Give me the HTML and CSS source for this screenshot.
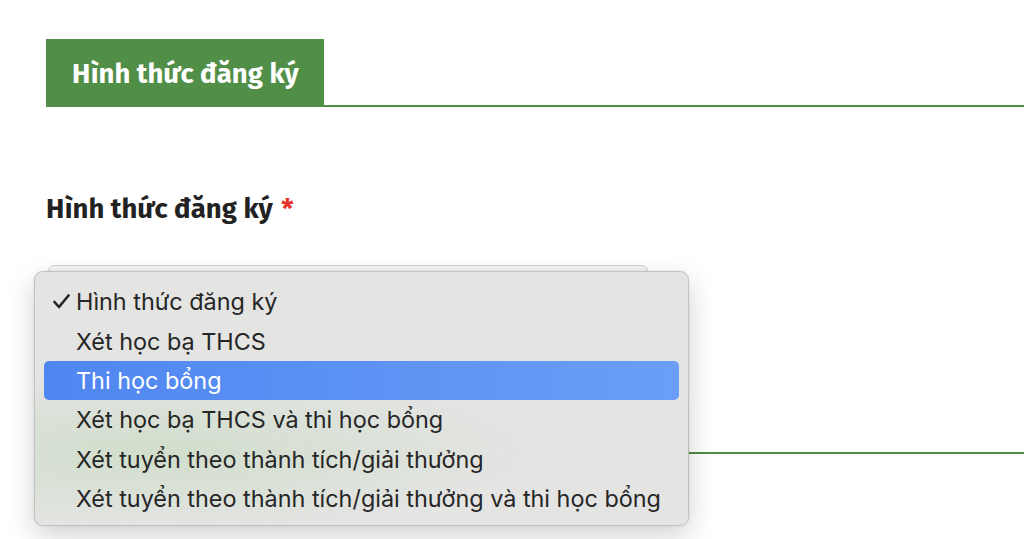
FILE: index.html
```html
<!DOCTYPE html>
<html lang="vi">
<head>
<meta charset="utf-8">
<title>Hình thức đăng ký</title>
<link rel="stylesheet" href="styles.css">
</head>
<body>
<div class="page">
  <div class="section-head">
    <div class="tab">Hình thức đăng ký</div>
    <div class="tab-line"></div>
  </div>
  <div class="field">
    <label class="field-label">Hình thức đăng ký <span class="req">*</span></label>
    <div class="select-box"></div>
  </div>
  <div class="section-line"></div>
</div>
<div class="menu">
  <div class="menu-item checked"><svg class="check" width="17" height="15" viewBox="0 0 17 15"><polyline points="1.5,8 6,13 15.5,1.5" fill="none" stroke="#262626" stroke-width="2.6" stroke-linecap="round" stroke-linejoin="round"/></svg>Hình thức đăng ký</div>
  <div class="menu-item">Xét học bạ THCS</div>
  <div class="menu-item active">Thi học bổng</div>
  <div class="menu-item">Xét học bạ THCS và thi học bổng</div>
  <div class="menu-item">Xét tuyển theo thành tích/giải thưởng</div>
  <div class="menu-item">Xét tuyển theo thành tích/giải thưởng và thi học bổng</div>
</div>
</body>
</html>
```
FILE: styles.css
```css
html, body {
  margin: 0;
  padding: 0;
  background: #ffffff;
  height: 100%;
  overflow: hidden;
}
.page {
  padding: 39px 0 0 46px;
  font-family: "Fira Sans", "Noto Sans", "Open Sans", sans-serif;
}
.section-head {
  display: flex;
  align-items: flex-end;
}
.tab {
  background: #518e48;
  color: #ffffff;
  font-weight: 700;
  font-size: 27.5px;
  height: 68px;
  padding: 0 26px;
  display: flex;
  align-items: center;
  box-sizing: border-box;
  width: 278px;
  white-space: nowrap;
}
.tab-line {
  flex: 1;
  height: 2px;
  background: #518e48;
}
.field {
  margin-top: 82px;
}
.field-label {
  display: block;
  font-weight: 700;
  font-size: 27.5px;
  color: #222222;
  line-height: 40px;
}
.req {
  color: #e8332a;
  margin-left: 2px;
}
.select-box {
  margin-top: 36px;
  margin-left: 2px;
  width: 598px;
  height: 44px;
  border: 1px solid #d4d4d4;
  border-radius: 6px;
  background: #f4f4f4;
}
.section-line {
  margin-top: 141px;
  height: 2px;
  background: #4f8d45;
}
.menu {
  position: absolute;
  left: 34px;
  top: 271px;
  width: 655px;
  height: 255px;
  box-sizing: border-box;
  padding: 10px 9px 9px;
  border-radius: 9px;
  border: 1px solid rgba(0,0,0,0.14);
  background:
    radial-gradient(ellipse 380px 80px at 120px 180px, rgba(140,200,120,0.22), rgba(140,200,120,0) 100%),
    #e4e4e3;
  box-shadow: 0 10px 28px rgba(0,0,0,0.18), 0 0 3px rgba(0,0,0,0.08);
  font-family: "Inter", "Roboto", sans-serif;
  font-size: 23.4px;
  color: #262626;
}
.menu-item {
  height: 39.4px;
  display: flex;
  align-items: center;
  padding-left: 32px;
  position: relative;
  border-radius: 5px;
  white-space: nowrap;
}
.check {
  position: absolute;
  left: 9px;
  top: 12px;
}
.menu-item.active {
  background: linear-gradient(90deg, #4f86f0 0%, #6a9ef8 100%);
  color: #ffffff;
}
```
